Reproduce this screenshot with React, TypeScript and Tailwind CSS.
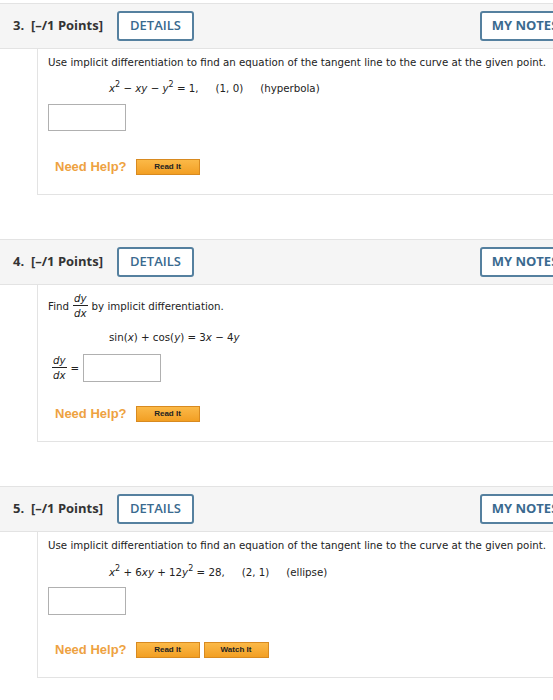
import type { ReactNode } from 'react';

const body = "font-['DejaVu_Sans',Verdana,sans-serif] text-[10.25px] leading-[14px] text-[#222]";

function V({ children }: { children: ReactNode }) {
  return <span className="italic">{children}</span>;
}

function Sup({ children }: { children: ReactNode }) {
  return <sup className="text-[8px] -top-[5px]">{children}</sup>;
}

function Frac({ top, bottom }: { top: ReactNode; bottom: ReactNode }) {
  return (
    <span className="inline-flex flex-col items-center align-middle mx-[4px] leading-[14px]">
      <span className="italic px-[1px]">{top}</span>
      <span className="italic px-[1px] border-t border-[#222]">{bottom}</span>
    </span>
  );
}

function HelpButton({ label, width }: { label: string; width: string }) {
  return (
    <span
      className={`${width} h-[16px] flex items-center justify-center border border-[#d88a20] bg-gradient-to-b from-[#fbb947] to-[#f29f22] font-['Liberation_Sans',Arial,sans-serif] text-[8px] font-bold text-[#222]`}
    >
      {label}
    </span>
  );
}

function NeedHelp({ watch, mt }: { watch?: boolean; mt: string }) {
  return (
    <div className={`flex items-center ${mt} ml-[7px]`}>
      <span className="font-['Liberation_Sans',Arial,sans-serif] text-[13px] font-bold text-[#eea241] leading-[16px]">
        Need Help?
      </span>
      <div className="flex gap-[4px] ml-[9px]">
        <HelpButton label="Read It" width="w-[64px]" />
        {watch && <HelpButton label="Watch It" width="w-[65px]" />}
      </div>
    </div>
  );
}

function Header({ num }: { num: number }) {
  return (
    <div className="h-[46px] flex items-center bg-[#f5f5f5] border-t border-b border-[#e3e3e3]">
      <span className="ml-[13px] font-['Open_Sans',sans-serif] text-[13px] font-bold text-[#333] whitespace-pre">
        {num}.  [–/1 Points]
      </span>
      <span className="ml-[14px] w-[77px] h-[30px] flex items-center justify-center rounded-[3px] border-2 border-[#55809f] bg-white font-['Open_Sans',sans-serif] text-[13px] font-semibold text-[#3a6a8f]">
        DETAILS
      </span>
      <span className="ml-auto mr-[10px] w-[90px] h-[30px] flex items-center justify-center rounded-[3px] border-2 border-[#55809f] bg-white font-['Open_Sans',sans-serif] text-[13px] font-bold text-[#3a6a8f]">
        MY NOTES
      </span>
    </div>
  );
}

function Content({ children, pt }: { children: ReactNode; pt: string }) {
  return (
    <div className={`ml-[37px] border-l border-b border-[#e3e3e3] pl-[10px] pb-[19px] ${pt} ${body}`}>
      {children}
    </div>
  );
}

export default function App() {
  return (
    <div className="w-[553px] h-[700px] overflow-hidden bg-white">
      <div className="w-[580px] pt-[3px]">
        {/* Question 3 */}
        <Header num={3} />
        <Content pt="pt-[6px]">
          <p>Use implicit differentiation to find an equation of the tangent line to the curve at the given point.</p>
          <p className="mt-[12px] ml-[61px]">
            <V>x</V>
            <Sup>2</Sup> − <V>xy</V> − <V>y</V>
            <Sup>2</Sup> = 1,<span className="ml-[17px]">(1, 0)</span>
            <span className="ml-[17px]">(hyperbola)</span>
          </p>
          <div className="mt-[9px] w-[78px] h-[27px] border border-[#b0b0b0]" />
          <NeedHelp mt="mt-[28px]" />
        </Content>

        <div className="h-[44px]" />

        {/* Question 4 */}
        <Header num={4} />
        <Content pt="pt-[6px]">
          <p className="flex items-center">
            Find
            <Frac top="dy" bottom="dx" />
            by implicit differentiation.
          </p>
          <p className="mt-[10px] ml-[61px]">
            sin(<V>x</V>) + cos(<V>y</V>) = 3<V>x</V> − 4<V>y</V>
          </p>
          <div className="mt-[9px] flex items-center">
            <Frac top="dy" bottom="dx" />
            <span>=</span>
            <div className="ml-[4px] w-[78px] h-[28px] border border-[#b0b0b0]" />
          </div>
          <NeedHelp mt="mt-[24px]" />
        </Content>

        <div className="h-[44px]" />

        {/* Question 5 */}
        <Header num={5} />
        <Content pt="pt-[6px]">
          <p>Use implicit differentiation to find an equation of the tangent line to the curve at the given point.</p>
          <p className="mt-[13px] ml-[61px]">
            <V>x</V>
            <Sup>2</Sup> + 6<V>xy</V> + 12<V>y</V>
            <Sup>2</Sup> = 28,<span className="ml-[17px]">(2, 1)</span>
            <span className="ml-[17px]">(ellipse)</span>
          </p>
          <div className="mt-[8px] w-[78px] h-[28px] border border-[#b0b0b0]" />
          <NeedHelp watch mt="mt-[27px]" />
        </Content>
      </div>
    </div>
  );
}
